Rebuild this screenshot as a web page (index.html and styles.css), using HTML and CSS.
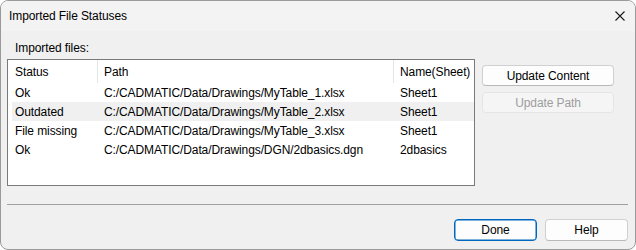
FILE: index.html
```html
<!DOCTYPE html>
<html lang="en">
<head>
  <meta charset="UTF-8">
  <title>Imported File Statuses</title>
  <link rel="stylesheet" href="styles.css">
</head>
<body>
  <div class="window">
    <div class="titlebar">
      <span class="title">Imported File Statuses</span>
      <svg class="close" width="10" height="10" viewBox="0 0 10 10">
        <path d="M0.5 0.5 L9.5 9.5 M9.5 0.5 L0.5 9.5" stroke="#1b1b1b" stroke-width="1.1" fill="none"/>
      </svg>
    </div>

    <div class="content">
      <div class="group-label">Imported files:</div>
      <div class="main">
        <div class="listbox">
          <div class="row header">
            <div class="cell c1 div">Status</div>
            <div class="cell c2 div">Path</div>
            <div class="cell c3">Name(Sheet)</div>
          </div>
          <div class="row">
            <div class="cell c1">Ok</div>
            <div class="cell c2">C:/CADMATIC/Data/Drawings/MyTable_1.xlsx</div>
            <div class="cell c3">Sheet1</div>
          </div>
          <div class="row selected">
            <div class="cell c1">Outdated</div>
            <div class="cell c2">C:/CADMATIC/Data/Drawings/MyTable_2.xlsx</div>
            <div class="cell c3">Sheet1</div>
          </div>
          <div class="row">
            <div class="cell c1">File missing</div>
            <div class="cell c2">C:/CADMATIC/Data/Drawings/MyTable_3.xlsx</div>
            <div class="cell c3">Sheet1</div>
          </div>
          <div class="row">
            <div class="cell c1">Ok</div>
            <div class="cell c2">C:/CADMATIC/Data/Drawings/DGN/2dbasics.dgn</div>
            <div class="cell c3">2dbasics</div>
          </div>
        </div>
        <div class="side-buttons">
          <button class="btn wide">Update Content</button>
          <button class="btn wide" disabled>Update Path</button>
        </div>
      </div>
      <div class="separator"></div>
      <div class="footer">
        <button class="btn small default">Done</button>
        <button class="btn small">Help</button>
      </div>
    </div>
  </div>
</body>
</html>
```

FILE: styles.css
```css
body {
  margin: 0;
  font-family: 'Liberation Sans', Arial, sans-serif;
  font-size: 12px;
  letter-spacing: -0.1px;
  color: #000;
  background: #ffffff;
}
.window {
  width: 636px;
  height: 250px;
  box-sizing: border-box;
  border: 1px solid #9a9a9a;
  border-radius: 8px;
  overflow: hidden;
  background: #f0f0f0;
}
.titlebar {
  height: 30px;
  background: #f3f3f3;
  display: flex;
  align-items: center;
  justify-content: space-between;
  padding: 0 10px 0 8px;
}
.title {
  margin-top: -1px;
}
.close {
  display: block;
  margin-top: -1px;
}
.content {
  padding: 9px 7px 0 6px;
}
.group-label {
  line-height: 16px;
  margin-left: 8px;
  margin-bottom: 3px;
}
.main {
  display: flex;
  gap: 7px;
}
.listbox {
  width: 468px;
  height: 127px;
  box-sizing: border-box;
  border: 1px solid #7a7a7a;
  background: #ffffff;
  padding-left: 4px;
}
.row {
  display: flex;
  height: 19px;
  align-items: center;
}
.row.header {
  height: 23px;
}
.row.selected {
  background: #f0f0f0;
}
.cell {
  white-space: nowrap;
  box-sizing: border-box;
  height: 100%;
  display: flex;
  align-items: center;
}
.c1 {
  width: 86px;
  padding-left: 3px;
}
.c2 {
  width: 296px;
  padding-left: 6px;
}
.c3 {
  flex: 1;
  padding-left: 6px;
}
.header .div {
  border-right: 1px solid #e5e5e5;
}
.side-buttons {
  display: flex;
  flex-direction: column;
  gap: 6px;
  padding-top: 6px;
}
.btn {
  font-family: inherit;
  font-size: 12px;
  letter-spacing: -0.1px;
  color: #000;
  background: #fdfdfd;
  border: 1px solid #d0d0d0;
  border-bottom-color: #b8b8b8;
  border-radius: 4px;
  height: 21px;
  padding: 0;
  box-sizing: border-box;
}
.btn.wide {
  width: 132px;
}
.btn:disabled {
  background: #f5f5f5;
  border-color: #e5e5e5;
  color: #9d9d9d;
}
.separator {
  height: 1px;
  background: #a0a0a0;
  margin: 18px 0 0 0;
}
.footer {
  display: flex;
  justify-content: flex-end;
  gap: 8px;
  padding-top: 14px;
}
.btn.small {
  width: 83px;
  height: 22px;
}
.btn.default {
  border: 1px solid #0067c0;
  box-shadow: inset 0 0 0 0.5px #0067c0;
}
```
